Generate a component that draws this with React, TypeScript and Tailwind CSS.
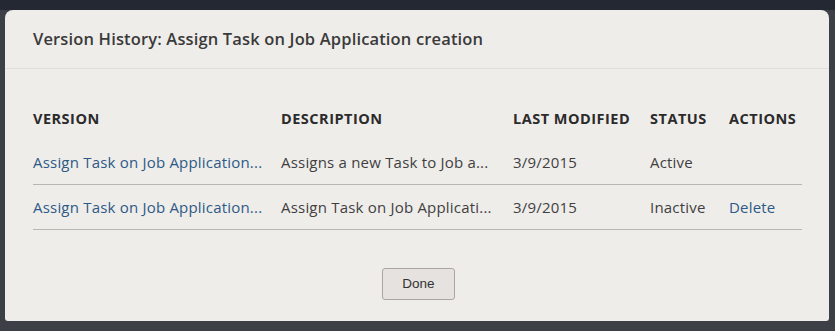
const rows = [
  {
    version: 'Assign Task on Job Application...',
    description: 'Assigns a new Task to Job a...',
    modified: '3/9/2015',
    status: 'Active',
    action: '',
  },
  {
    version: 'Assign Task on Job Application...',
    description: 'Assign Task on Job Applicati...',
    modified: '3/9/2015',
    status: 'Inactive',
    action: 'Delete',
  },
];

export default function App() {
  return (
    <div
      className="w-[835px] h-[331px] bg-[#3c3f45] flex flex-col overflow-hidden"
      style={{ fontFamily: '"Open Sans", "Noto Sans", sans-serif' }}
    >
      <div className="h-[10px] bg-[#232832] shrink-0" />
      <div className="mx-[5px] mr-[6px] h-[311px] bg-[#efedea] rounded-t-[8px] rounded-b-[3px] flex flex-col">
        <div className="h-[59px] border-b border-[#e0deda] flex items-center px-[28px]">
          <h2 className="text-[16.5px] font-semibold text-[#3a3a3a] tracking-[0.15px]">
            Version History: Assign Task on Job Application creation
          </h2>
        </div>
        <div className="px-[28px] pt-[38px]">
          <div className="w-[769px]">
            <div className="grid grid-cols-[248px_232px_137px_79px_1fr] h-[33px] pb-[10px] items-center text-[14.5px] font-bold text-[#2b2b2b] tracking-[0.5px]">
              <div>VERSION</div>
              <div>DESCRIPTION</div>
              <div>LAST MODIFIED</div>
              <div>STATUS</div>
              <div>ACTIONS</div>
            </div>
            {rows.map((r, i) => (
              <div
                key={i}
                className="grid grid-cols-[248px_232px_137px_79px_1fr] h-[45px] items-center text-[15px] tracking-[0.2px] border-b border-[#b8b6b2] whitespace-nowrap"
              >
                <div className="text-[#2d5a86]">{r.version}</div>
                <div className="text-[#3f3f3f]">{r.description}</div>
                <div className="text-[#3f3f3f]">{r.modified}</div>
                <div className="text-[#3f3f3f]">{r.status}</div>
                <div className="text-[#2d5a86]">{r.action}</div>
              </div>
            ))}
          </div>
        </div>
        <div className="flex justify-center pt-[38px]">
          <button className="w-[73px] h-[32px] ml-[3px] rounded-[3px] border border-[#aaa7a3] bg-[#e5e2df] text-[13.5px] text-[#333]" style={{ fontFamily: '"Liberation Sans", Arial, sans-serif' }}>
            Done
          </button>
        </div>
      </div>
    </div>
  );
}
